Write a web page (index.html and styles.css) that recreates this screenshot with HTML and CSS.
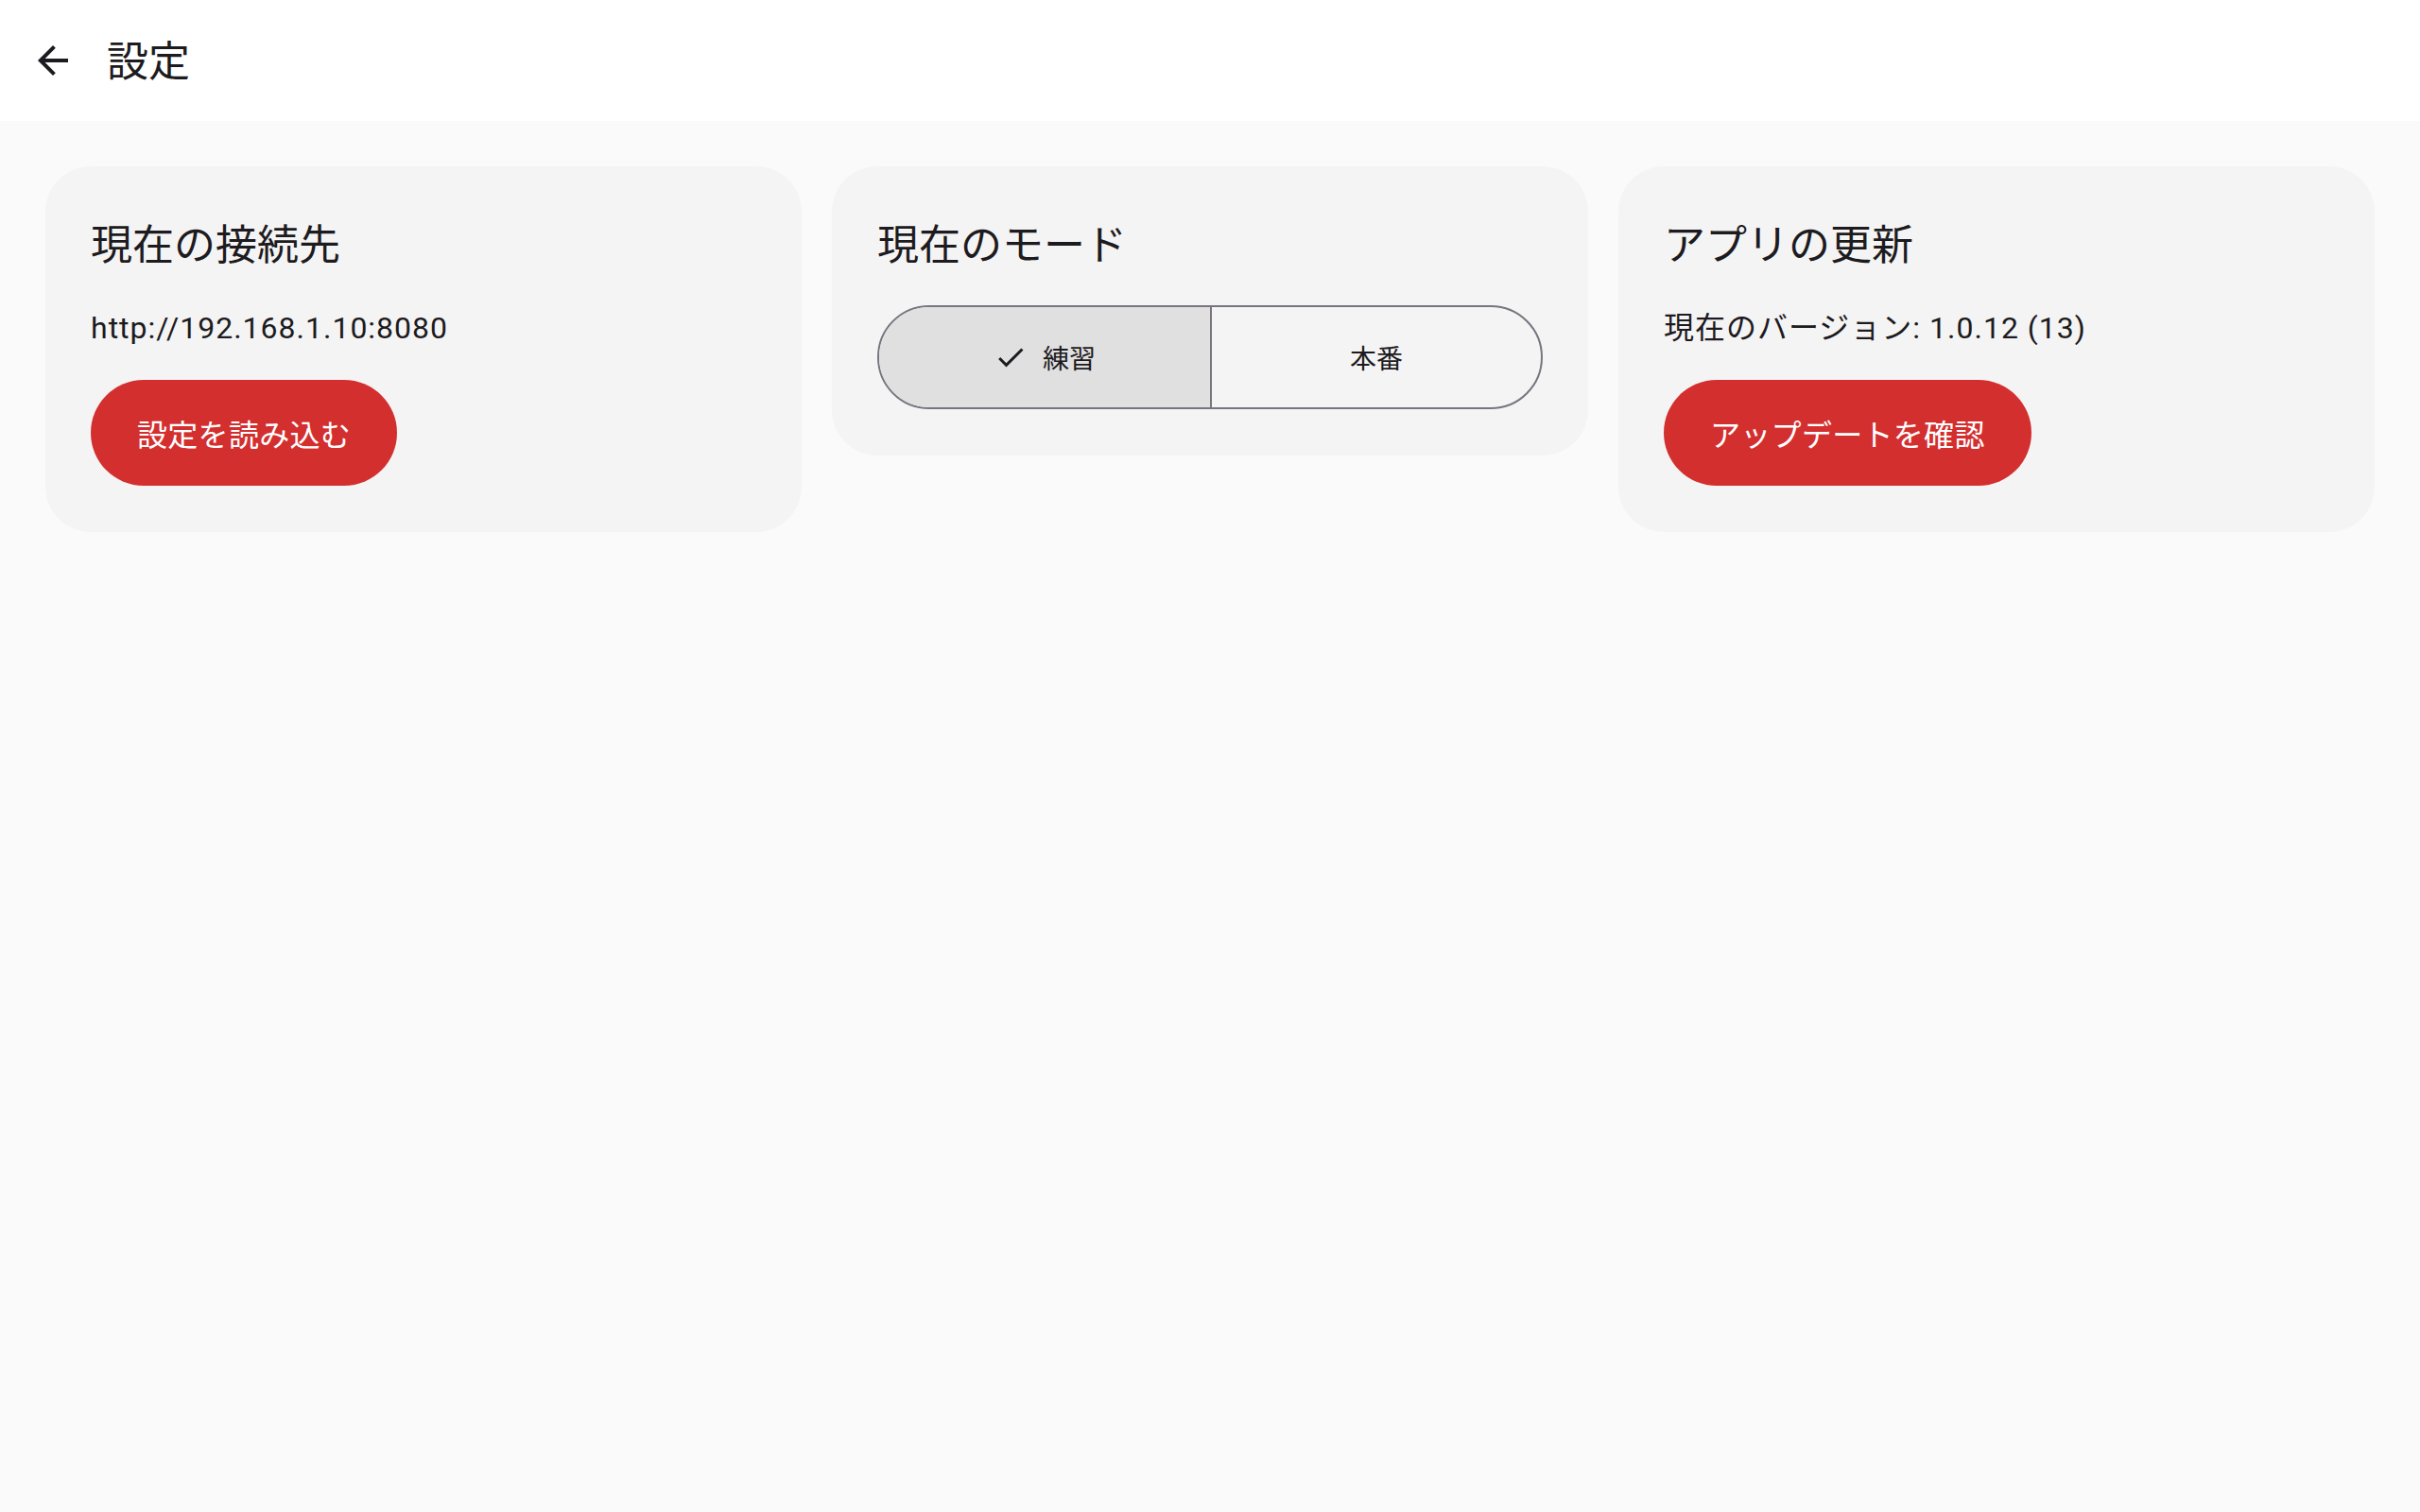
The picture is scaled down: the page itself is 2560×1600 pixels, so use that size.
FILE: index.html
```html
<!DOCTYPE html>
<html lang="ja">
<head>
<meta charset="utf-8">
<title>設定</title>
<link rel="stylesheet" href="styles.css">
</head>
<body>
<header class="appbar">
  <button class="back" aria-label="戻る">
    <svg viewBox="0 0 24 24" width="48" height="48"><path d="M20 11H7.83l5.59-5.59L12 4l-8 8 8 8 1.41-1.41L7.83 13H20v-2z"/></svg>
  </button>
  <h1 class="appbar-title">設定</h1>
</header>
<main class="content">
  <section class="card">
    <h2 class="card-title">現在の接続先</h2>
    <p class="card-text">http://192.168.1.10:8080</p>
    <button class="filled-btn">設定を読み込む</button>
  </section>
  <section class="card">
    <h2 class="card-title">現在のモード</h2>
    <div class="segmented">
      <button class="segment selected">
        <svg class="check" viewBox="0 0 24 24" width="36" height="36"><path d="M9 16.17L4.83 12l-1.42 1.41L9 19 21 7l-1.41-1.41z"/></svg>
        <span>練習</span>
      </button>
      <button class="segment"><span>本番</span></button>
    </div>
  </section>
  <section class="card">
    <h2 class="card-title">アプリの更新</h2>
    <p class="card-text">現在のバージョン: 1.0.12 (13)</p>
    <button class="filled-btn">アップデートを確認</button>
  </section>
</main>
</body>
</html>
```
FILE: styles.css
```css
* {
  box-sizing: border-box;
}

html, body {
  margin: 0;
  padding: 0;
}

body {
  width: 2560px;
  height: 1600px;
  background: #fafafa;
  font-family: Roboto, "Noto Sans CJK JP", sans-serif;
  color: #1d1b20;
}

.appbar {
  height: 128px;
  background: #ffffff;
  display: flex;
  align-items: center;
  padding-left: 32px;
}

.back {
  width: 48px;
  height: 48px;
  padding: 0;
  border: 0;
  background: transparent;
  display: flex;
  fill: #1d1b20;
}

.appbar-title {
  margin: 0 0 0 33px;
  font-size: 44px;
  font-weight: 400;
  line-height: 56px;
  padding-top: 3px;
}

.content {
  display: grid;
  grid-template-columns: repeat(3, 1fr);
  gap: 32px;
  padding: 48px;
  align-items: start;
}

.card {
  background: #f4f4f4;
  border-radius: 48px;
  padding: 48px 48px 49px;
  display: flex;
  flex-direction: column;
  align-items: flex-start;
}

.card-title {
  margin: 0 0 27px;
  font-size: 44px;
  font-weight: 400;
  line-height: 72px;
}

.card-text {
  margin: 0 0 31px;
  font-size: 32px;
  line-height: 48px;
  letter-spacing: 1px;
  color: #1d1b20;
}

.filled-btn {
  height: 112px;
  padding: 0 49px;
  border: 0;
  border-radius: 56px;
  background: #d32f2f;
  color: #ffffff;
  font-family: Roboto, "Noto Sans CJK JP", sans-serif;
  font-size: 32px;
  letter-spacing: 0.3px;
  font-weight: 400;
}

.segmented {
  width: 100%;
  height: 110px;
  display: grid;
  grid-template-columns: 1fr 1fr;
  border: 2px solid #79747e;
  border-radius: 55px;
  overflow: hidden;
}

.segment {
  border: 0;
  margin: 0;
  background: transparent;
  display: flex;
  align-items: center;
  justify-content: center;
  gap: 16px;
  font-family: Roboto, "Noto Sans CJK JP", sans-serif;
  font-size: 28px;
  color: #1d1b20;
  padding: 0;
}

.segment + .segment {
  border-left: 2px solid #79747e;
}

.segment.selected {
  background: #e0e0e0;
}

.check {
  fill: #1d1b20;
  flex: none;
}
```
